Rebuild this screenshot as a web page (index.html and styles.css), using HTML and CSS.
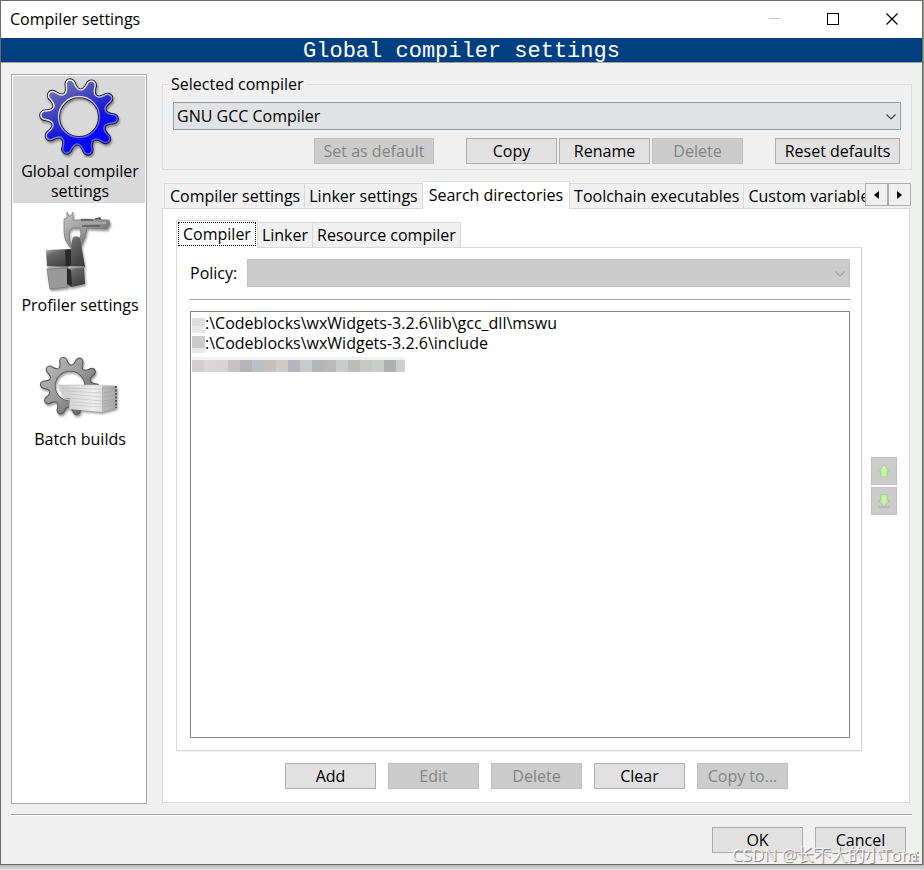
FILE: index.html
```html
<!DOCTYPE html>
<html lang="en">
<head>
    <meta charset="UTF-8">
    <meta name="viewport" content="width=device-width, initial-scale=1.0">
    <title>Compiler settings</title>
    <link rel="stylesheet" href="styles.css">
</head>
<body>
    <!-- shared gear shapes -->
    <svg class="defs" width="0" height="0" aria-hidden="true">
        <defs>
            <path id="tooth" d="M25.7 -8.3C26.4 -6 29 -4.8 33 -4.2C40 -4.4 40 4.4 33 4.2C29 4.8 26.4 6 25.7 8.3"/>
            <g id="teeth">
                <use href="#tooth" transform="rotate(3)"/>
                <use href="#tooth" transform="rotate(39)"/>
                <use href="#tooth" transform="rotate(75)"/>
                <use href="#tooth" transform="rotate(111)"/>
                <use href="#tooth" transform="rotate(147)"/>
                <use href="#tooth" transform="rotate(183)"/>
                <use href="#tooth" transform="rotate(219)"/>
                <use href="#tooth" transform="rotate(255)"/>
                <use href="#tooth" transform="rotate(291)"/>
                <use href="#tooth" transform="rotate(327)"/>
            </g>
            <mask id="gear-fill" maskUnits="userSpaceOnUse" x="-42" y="-42" width="84" height="84">
                <use href="#teeth" fill="#fff"/>
                <circle r="27" fill="#fff"/>
                <circle r="20" fill="#000"/>
            </mask>
            <mask id="gear-edge" maskUnits="userSpaceOnUse" x="-42" y="-42" width="84" height="84">
                <use href="#teeth" fill="none" stroke="#fff" stroke-width="1.5"/>
                <circle r="20.5" fill="none" stroke="#fff" stroke-width="1.3"/>
            </mask>
            <linearGradient id="blue" x1="0.2" y1="0" x2="0.7" y2="0.9">
                <stop offset="0" stop-color="#8585bd"/>
                <stop offset="0.3" stop-color="#5454b4"/>
                <stop offset="0.65" stop-color="#1515dc"/>
                <stop offset="1" stop-color="#0000ff"/>
            </linearGradient>
            <linearGradient id="shine" x1="0.2" y1="0" x2="0.8" y2="0.9">
                <stop offset="0" stop-color="#ffffff"/>
                <stop offset="0.4" stop-color="#d8d8f4"/>
                <stop offset="0.65" stop-color="#6c6ce8"/>
                <stop offset="1" stop-color="#4848ff"/>
            </linearGradient>
            <linearGradient id="steel" x1="0" y1="0" x2="1" y2="1">
                <stop offset="0" stop-color="#c6c6c6"/>
                <stop offset="0.5" stop-color="#969696"/>
                <stop offset="1" stop-color="#4b4b4b"/>
            </linearGradient>
            <linearGradient id="dark" x1="0" y1="0" x2="0.6" y2="1">
                <stop offset="0" stop-color="#b9b9b9"/>
                <stop offset="0.3" stop-color="#696969"/>
                <stop offset="1" stop-color="#3f3f3f"/>
            </linearGradient>
            <linearGradient id="pages" x1="0" y1="0" x2="1" y2="0">
                <stop offset="0" stop-color="#c8c8c8"/>
                <stop offset="0.6" stop-color="#eeeeee"/>
                <stop offset="1" stop-color="#c4c4c4"/>
            </linearGradient>
            <linearGradient id="green" x1="0" y1="0" x2="1" y2="0">
                <stop offset="0" stop-color="#9dd77e"/>
                <stop offset="0.5" stop-color="#d3f2bd"/>
                <stop offset="1" stop-color="#a2da83"/>
            </linearGradient>
        </defs>
    </svg>

    <div class="window">
        <header class="titlebar">
            <span class="title">Compiler settings</span>
            <button type="button" class="win-button" aria-label="Minimize" disabled>
                <svg width="14" height="14" viewBox="0 0 14 14"><path d="M2 6.5H13" stroke="#c4c4c4"/></svg>
            </button>
            <button type="button" class="win-button" aria-label="Maximize">
                <svg width="14" height="14" viewBox="0 0 14 14"><rect x="1.5" y="1.5" width="11" height="11" fill="none" stroke="#000"/></svg>
            </button>
            <button type="button" class="win-button" aria-label="Close">
                <svg width="14" height="14" viewBox="0 0 14 14"><path d="M1.5 1.5L12.5 12.5M12.5 1.5L1.5 12.5" stroke="#000" stroke-width="1.2"/></svg>
            </button>
        </header>
        <h1 class="banner">Global compiler settings</h1>

        <div class="content">
            <nav class="sidebar">
                <button type="button" class="category selected">
                    <svg class="category-icon" width="84" height="80" viewBox="-41 -39 84 80">
                        <g class="shadow">
                            <use href="#teeth" fill="none" stroke="#111" stroke-width="3.2"/>
                            <circle r="20" fill="none" stroke="#111" stroke-width="2"/>
                            <rect x="-42" y="-42" width="84" height="84" fill="url(#blue)" mask="url(#gear-fill)"/>
                        </g>
                        <rect x="-42" y="-42" width="84" height="84" fill="url(#shine)" mask="url(#gear-edge)"/>
                    </svg>
                    <span>Global compiler settings</span>
                </button>
                <button type="button" class="category">
                    <svg class="category-icon" width="84" height="80" viewBox="-5 1 84 80">
                        <g class="shadow">
                            <path d="M24 1L26 5H28L30 1V9L35 9L40 8L66 9L67 13L64 18L44 17Q43 26 38 35L34 36L38 23L37 17H29L26 21L27 31L31 36L27 36Q21 29 21 21V8L24 7Z" fill="url(#steel)" stroke="#777" stroke-width="0.7"/>
                            <path d="M38 9H50M52 8L57 7V9M39 15H57" stroke="#555" stroke-width="1.6" fill="none"/>
                            <path d="M41 11H63V13H41Z" fill="#a4a4a4"/>
                            <path d="M30 26Q34 24 37 27L42 56L22 55Q29 42 29 29Z" fill="url(#dark)"/>
                            <path d="M3 39L26 38L28 54L24 57L4 55Z" fill="url(#dark)"/>
                            <path d="M22 39L28 38L28 54L23 57Z" fill="#292929"/>
                            <path d="M4 58L24 57L25 76L7 78Z" fill="#999" stroke="#777" stroke-width="0.8"/>
                            <path d="M24 57L41 56L42 73L28 76L24 73Z" fill="url(#dark)"/>
                            <path d="M24 57L28 59L29 75L24 73Z" fill="#292929"/>
                            <path d="M4 56H41" stroke="#c7c7c7" stroke-width="0.8"/>
                        </g>
                    </svg>
                    <span>Profiler settings</span>
                </button>
                <button type="button" class="category">
                    <svg class="category-icon" width="84" height="80" viewBox="0 -2 84 80">
                        <g class="shadow">
                            <g transform="translate(32 38) scale(0.76)">
                                <use href="#teeth" fill="none" stroke="#555" stroke-width="2.8"/>
                                <circle r="20" fill="none" stroke="#555" stroke-width="2"/>
                                <rect x="-42" y="-42" width="84" height="84" fill="url(#steel)" mask="url(#gear-fill)"/>
                            </g>
                            <path d="M20 37L65 37L79 38L78 60L64 64L31 61L32 50H26Z" fill="url(#pages)"/>
                            <path d="M20 37L65 37L79 38M24 40L64 41L78 40M27 43L64 45L78 43M30 46L64 49L78 47M32 50L64 53L78 51M33 54L64 56L78 54M33 57L64 59L78 57" fill="none" stroke="#b4b4b4" stroke-width="0.5"/>
                            <path d="M64 38V64L78 60V38Z" fill="#666" opacity="0.3"/>
                            <path d="M78 38V60" stroke="#555" stroke-width="2" stroke-dasharray="2 1.5"/>
                        </g>
                    </svg>
                    <span>Batch builds</span>
                </button>
            </nav>

            <main class="main">
                <fieldset class="compiler">
                    <legend>Selected compiler</legend>
                    <div class="select-box">
                        <select aria-label="Selected compiler">
                            <option>GNU GCC Compiler</option>
                        </select>
                        <svg class="chevron" width="12" height="8" viewBox="0 0 12 8"><path d="M1.5 1.5L6 6L10.5 1.5" fill="none" stroke="#444" stroke-width="1.2"/></svg>
                    </div>
                    <div class="compiler-buttons">
                        <button type="button" class="button set-default" disabled>Set as default</button>
                        <button type="button" class="button">Copy</button>
                        <button type="button" class="button">Rename</button>
                        <button type="button" class="button" disabled>Delete</button>
                        <button type="button" class="button reset">Reset defaults</button>
                    </div>
                </fieldset>

                <div class="tab-bar">
                    <div class="tabs" role="tablist">
                        <button type="button" class="tab" role="tab">Compiler settings</button>
                        <button type="button" class="tab" role="tab">Linker settings</button>
                        <button type="button" class="tab active" role="tab" aria-selected="true">Search directories</button>
                        <button type="button" class="tab" role="tab">Toolchain executables</button>
                        <button type="button" class="tab" role="tab">Custom variables</button>
                    </div>
                    <div class="tab-scroll">
                        <button type="button" aria-label="Scroll tabs left"><svg width="5" height="8" viewBox="0 0 5 8"><path d="M5 0V8L0 4Z"/></svg></button>
                        <button type="button" aria-label="Scroll tabs right"><svg width="5" height="8" viewBox="0 0 5 8"><path d="M0 0V8L5 4Z"/></svg></button>
                    </div>
                </div>

                <section class="page">
                    <div class="page-body">
                        <div class="directories">
                            <div class="tabs inner" role="tablist">
                                <button type="button" class="tab active focused" role="tab" aria-selected="true">Compiler</button>
                                <button type="button" class="tab" role="tab">Linker</button>
                                <button type="button" class="tab" role="tab">Resource compiler</button>
                            </div>
                            <div class="inner-page">
                                <div class="policy">
                                    <label for="policy">Policy:</label>
                                    <div class="select-box">
                                        <select id="policy" disabled></select>
                                        <svg class="chevron" width="12" height="8" viewBox="0 0 12 8"><path d="M1.5 1.5L6 6L10.5 1.5" fill="none" stroke="#a0a0a0" stroke-width="1.2"/></svg>
                                    </div>
                                </div>
                                <hr>
                                <ul class="paths">
                                    <li><span class="redacted"></span>:\Codeblocks\wxWidgets-3.2.6\lib\gcc_dll\mswu</li>
                                    <li><span class="redacted second"></span>:\Codeblocks\wxWidgets-3.2.6\include</li>
                                    <li><span class="mosaic"></span></li>
                                </ul>
                            </div>
                        </div>
                        <div class="order">
                            <button type="button" class="button" aria-label="Move up" disabled>
                                <svg width="16" height="16" viewBox="0 0 16 16"><path d="M8 2L14 8.5H11.5V14H4.5V8.5H2Z" fill="url(#green)" stroke="#a5d490" stroke-linejoin="round"/></svg>
                            </button>
                            <button type="button" class="button" aria-label="Move down" disabled>
                                <svg width="16" height="16" viewBox="0 0 16 16"><ellipse cx="8" cy="14" rx="6" ry="1.5" fill="#bbb"/><path d="M8 13L2 7.5H4.5V1.5H11.5V7.5H14Z" fill="url(#green)" stroke="#a5d490" stroke-linejoin="round"/></svg>
                            </button>
                        </div>
                    </div>
                    <div class="path-buttons">
                        <button type="button" class="button">Add</button>
                        <button type="button" class="button" disabled>Edit</button>
                        <button type="button" class="button" disabled>Delete</button>
                        <button type="button" class="button">Clear</button>
                        <button type="button" class="button" disabled>Copy to...</button>
                    </div>
                </section>
            </main>
        </div>

        <footer class="footer">
            <button type="button" class="button">OK</button>
            <button type="button" class="button">Cancel</button>
        </footer>
    </div>
    <div class="watermark">CSDN @长不大的小Tom</div>
    <svg class="grip" width="12" height="12" viewBox="0 0 12 12" fill="#aaa"><path d="M8 0h2v2h-2zM4 4h2v2h-2zM8 4h2v2h-2zM0 8h2v2h-2zM4 8h2v2h-2zM8 8h2v2h-2z"/></svg>
</body>
</html>
```

FILE: styles.css
```css
* {
    box-sizing: border-box;
}
body {
    font-family: 'Open Sans', 'Noto Sans CJK SC', sans-serif;
    font-size: 16px;
    line-height: 20px;
    color: #000;
    margin: 0;
    padding: 0 1px 5px 0;
    min-height: 100vh;
    display: flex;
    background: linear-gradient(to top, #e2e2e2, #b4b4b4 5px, #8d9d8c 6px);
}
button, select {
    font: inherit;
    color: inherit;
    margin: 0;
    padding: 0;
}
.defs {
    position: absolute;
}
.window {
    flex: 1;
    min-width: 0;
    display: flex;
    flex-direction: column;
    background: #f0f0f0;
    border: 1px solid #6b6b6b;
}
.titlebar {
    display: flex;
    align-items: center;
    height: 37px;
    padding: 0 1px 1px 9px;
    background: #fff;
}
.title {
    flex: 1;
}
.win-button {
    width: 59px;
    height: 36px;
    border: none;
    background: none;
    display: flex;
    align-items: center;
    justify-content: center;
}
.banner {
    margin: 0;
    height: 25px;
    line-height: 28px;
    background: #004080;
    border-bottom: 1px solid #a0a0a0;
    color: #fff;
    font-family: 'Liberation Mono', monospace;
    font-size: 22px;
    font-weight: normal;
    text-align: center;
}
.content {
    flex: 1;
    display: flex;
    gap: 15px;
    margin: 0 10px;
    padding: 11px 0 10px;
    border-bottom: 1px solid #a0a0a0;
    box-shadow: 0 1px #fff;
}
.sidebar {
    width: 136px;
    padding: 1px;
    background: #fff;
    border: 1px solid #a5a7b0;
    display: flex;
    flex-direction: column;
    gap: 7px;
}
.category {
    height: 127px;
    padding: 2px 4px 0 6px;
    border: none;
    background: none;
    display: flex;
    flex-direction: column;
    align-items: center;
    gap: 3px;
}
.category.selected {
    background: #d9d9d9;
}
.category-icon {
    flex: none;
}
.shadow {
    filter: drop-shadow(1px 2px 1px rgba(0, 0, 0, 0.4));
}
.main {
    flex: 1;
    min-width: 0;
    display: flex;
    flex-direction: column;
}
.compiler {
    margin: 0 0 11px;
    padding: 8px 10px 5px;
    border: 1px solid #dcdcdc;
    min-width: 0;
}
.compiler legend {
    padding: 0 2px;
    margin-left: -4px;
}
.select-box {
    flex: 1;
    position: relative;
}
.select-box select {
    display: block;
    appearance: none;
    width: 100%;
    height: 28px;
    padding: 0 3px;
    border: 1px solid #8fa1b1;
    border-radius: 0;
    background: #e1e2e4;
    opacity: 1;
}
.select-box select:disabled {
    background: #ccc;
    border-color: #bfbfbf;
}
.chevron {
    position: absolute;
    right: 4px;
    top: 11px;
    pointer-events: none;
}
.compiler-buttons {
    display: flex;
    justify-content: flex-end;
    gap: 2px;
    padding: 8px 1px 0 0;
}
.button {
    width: 91px;
    height: 26px;
    background: #e1e1e1;
    border: 1px solid #adadad;
    display: flex;
    align-items: center;
    justify-content: center;
}
.button:disabled {
    background: #ccc;
    border-color: #bfbfbf;
    color: #838383;
}
.set-default {
    width: 120px;
    margin-right: 30px;
}
.reset {
    width: 125px;
    margin-left: 30px;
}
.tab-bar {
    display: flex;
}
.tabs {
    flex: 1;
    min-width: 0;
    overflow: hidden;
    display: flex;
    align-items: flex-end;
    height: 28px;
    padding-left: 2px;
    margin-bottom: -1px;
    z-index: 1;
}
.tab {
    flex: none;
    height: 26px;
    padding: 0 4px;
    border: 1px solid #d9d9d9;
    border-left: none;
    background: #f0f0f0;
    white-space: nowrap;
}
.tab:first-child {
    padding-left: 5px;
    border-left: 1px solid #d9d9d9;
}
.tab.active {
    height: 28px;
    padding: 0 6px 2px;
    background: #fff;
    border-bottom: none;
}
.tab-scroll {
    display: flex;
    height: 23px;
    margin: 2px 1px 0 0;
}
.tab-scroll button {
    width: 23px;
    border: 1px solid #adadad;
    background: #f0f0f0;
    display: flex;
    align-items: center;
    justify-content: center;
}
.page {
    flex: 1;
    display: flex;
    flex-direction: column;
    margin: 0 2px 1px 0;
    padding: 11px 12px 13px 13px;
    background: #fff;
    border: 1px solid #d9d9d9;
}
.page-body {
    flex: 1;
    display: flex;
    gap: 9px;
}
.directories {
    flex: 1;
    min-width: 0;
    display: flex;
    flex-direction: column;
}
.tabs.inner {
    flex: none;
    padding-left: 0;
}
.tabs .focused {
    outline: 1px dotted #000;
    outline-offset: -3px;
}
.inner-page {
    flex: 1;
    display: flex;
    flex-direction: column;
    padding: 11px 11px 12px 13px;
    border: 1px solid #d9d9d9;
    box-shadow: 1px 1px #f0f0f0;
}
.policy {
    display: flex;
    align-items: center;
    gap: 10px;
}
hr {
    width: 100%;
    margin: 12px 0 11px;
    border: none;
    border-top: 1px solid #a0a0a0;
}
.paths {
    flex: 1;
    margin: 0;
    padding: 1px;
    border: 1px solid #828790;
    list-style: none;
}
.paths li {
    display: flex;
    height: 20px;
}
.redacted {
    width: 13px;
    margin-top: 5px;
    background: linear-gradient(#dedede 8px, #e8e8e8 8px);
}
.redacted.second {
    margin-top: 3px;
    background: linear-gradient(#cbcbcb 12px, #e8e8e8 12px);
}
/* blurred-out third path */
.mosaic {
    width: 213px;
    height: 15px;
    margin-top: 4px;
    border-top: 3px solid #f2f2f2;
    background: linear-gradient(90deg, #cfcdce 12px, #d9d8d9 12px 24px, #d5d3d4 24px 36px, #c5c3c4 36px 48px, #b5b3b3 48px 60px, #bbc0c5 60px 72px, #c5c0bb 72px 84px, #cccbc7 84px 96px, #b1b8c0 96px 108px, #cac8c8 108px 120px, #b4b7b9 120px 132px, #bab9b6 132px 144px, #c9cbca 144px 156px, #bcbcba 156px 168px, #c7c7c7 168px 180px, #cbcdcb 180px 192px, #afb1b0 192px 204px, #cecece 204px);
}
.order {
    display: flex;
    flex-direction: column;
    justify-content: center;
    gap: 2px;
}
.order .button {
    width: 26px;
    height: 28px;
}
.path-buttons {
    display: flex;
    justify-content: center;
    gap: 12px;
    padding-top: 12px;
}
.footer {
    display: flex;
    justify-content: flex-end;
    gap: 12px;
    padding: 12px 16px 11px;
}
.watermark {
    position: absolute;
    right: 7px;
    bottom: 4px;
    font-size: 17px;
    line-height: 22px;
    color: rgba(255, 255, 255, 0.8);
    text-shadow: 1px 1px 1px #777;
    white-space: nowrap;
    pointer-events: none;
}
.grip {
    position: absolute;
    right: 3px;
    bottom: 6px;
}
```
